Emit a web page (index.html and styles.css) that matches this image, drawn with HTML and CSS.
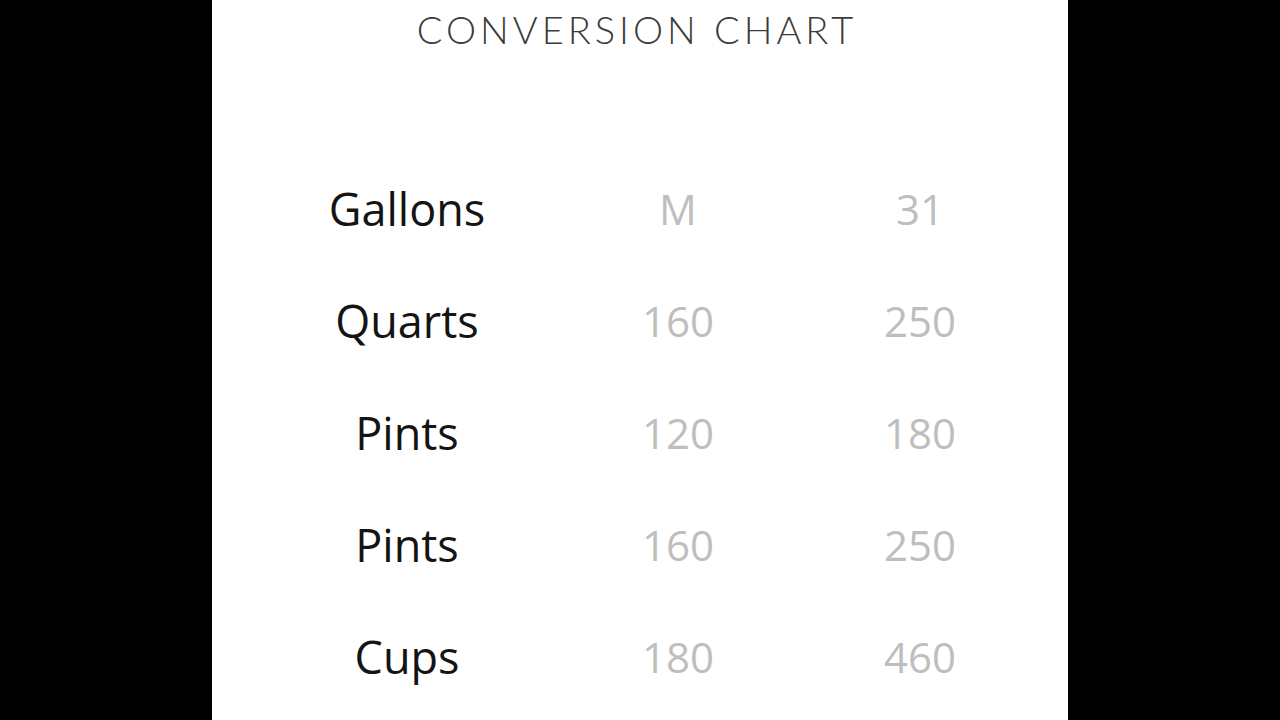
FILE: index.html
```html
<!DOCTYPE html>
<html>
<head>
  <meta charset="UTF-8">
  <title>Conversion Chart</title>
  <link rel="stylesheet" href="styles.css">
</head>
<body>
  <div class="sheet">
    <h1 class="title">CONVERSION CHART</h1>

    <div class="chart">
      <div class="unit">Gallons</div>
      <div class="val">M</div>
      <div class="val">31</div>

      <div class="unit">Quarts</div>
      <div class="val">160</div>
      <div class="val">250</div>

      <div class="unit">Pints</div>
      <div class="val">120</div>
      <div class="val">180</div>

      <div class="unit">Pints</div>
      <div class="val">160</div>
      <div class="val">250</div>

      <div class="unit">Cups</div>
      <div class="val">180</div>
      <div class="val">460</div>
    </div>
  </div>
</body>
</html>
```

FILE: styles.css
```css
html, body {
  margin: 0;
  height: 100%;
  background-color: #000;
  overflow: hidden;
}
body {
  display: flex;
  justify-content: center;
}
.sheet {
  width: 856px;
  height: 100%;
  background-color: #fff;
}
.title {
  margin: 0;
  height: 60px;
  line-height: 58px;
  text-align: center;
  font-family: Lato, sans-serif;
  font-weight: 300;
  font-size: 38px;
  letter-spacing: 4px;
  color: #3c3c3c;
  padding-right: 6px;
}
.chart {
  display: grid;
  grid-template-columns: 270px 272px 212px;
  grid-auto-rows: 112px;
  margin-top: 93px;
  padding-left: 60px;
  font-family: "Open Sans", sans-serif;
  font-size: 42px;
}
.chart div {
  line-height: 112px;
  text-align: center;
}
.unit {
  color: #141414;
  font-size: 45px;
}
.val {
  color: #bebebe;
}
```
